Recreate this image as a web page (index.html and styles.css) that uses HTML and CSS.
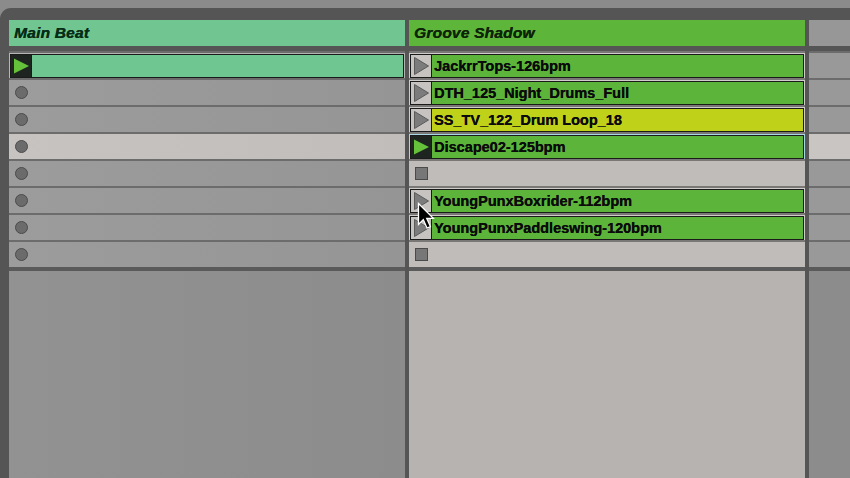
FILE: index.html
```html
<!DOCTYPE html>
<html>
<head>
<meta charset="utf-8">
<link rel="stylesheet" href="styles.css">
</head>
<body>
<div class="panel">
  <div class="board">
    <div class="track t-main">
      <div class="head head-mint">Main Beat</div>
      <div class="slots">
        <div class="slot"><div class="clip mint"><span class="play on"><svg width="20" height="22" viewBox="0 0 20 22"><path d="M3 3.5 L18 11 L3 18.5 Z" fill="#66c13a"/></svg></span><span class="name"></span></div></div>
        <div class="slot"><span class="rec"></span></div>
        <div class="slot"><span class="rec"></span></div>
        <div class="slot sel"><span class="rec"></span></div>
        <div class="slot"><span class="rec"></span></div>
        <div class="slot"><span class="rec"></span></div>
        <div class="slot"><span class="rec"></span></div>
        <div class="slot"><span class="rec"></span></div>
      </div>
      <div class="fill"></div>
    </div>

    <div class="track t-groove">
      <div class="head head-green">Groove Shadow</div>
      <div class="slots">
        <div class="slot"><div class="clip green"><span class="play"><svg width="20" height="22" viewBox="0 0 20 22"><path d="M3.5 2.5 L17.5 11 L3.5 19.5 Z" fill="#7c7c7c" stroke="#5a5a5a" stroke-width="1"/></svg></span><span class="name">JackrrTops-126bpm</span></div></div>
        <div class="slot"><div class="clip green"><span class="play"><svg width="20" height="22" viewBox="0 0 20 22"><path d="M3.5 2.5 L17.5 11 L3.5 19.5 Z" fill="#7c7c7c" stroke="#5a5a5a" stroke-width="1"/></svg></span><span class="name">DTH_125_Night_Drums_Full</span></div></div>
        <div class="slot"><div class="clip yellow"><span class="play"><svg width="20" height="22" viewBox="0 0 20 22"><path d="M3.5 2.5 L17.5 11 L3.5 19.5 Z" fill="#7c7c7c" stroke="#5a5a5a" stroke-width="1"/></svg></span><span class="name">SS_TV_122_Drum Loop_18</span></div></div>
        <div class="slot"><div class="clip green selected"><span class="play on"><svg width="20" height="22" viewBox="0 0 20 22"><path d="M3 3.5 L18 11 L3 18.5 Z" fill="#66c13a"/></svg></span><span class="name">Discape02-125bpm</span></div></div>
        <div class="slot"><span class="stop"></span></div>
        <div class="slot"><div class="clip green"><span class="play"><svg width="20" height="22" viewBox="0 0 20 22"><path d="M3.5 2.5 L17.5 11 L3.5 19.5 Z" fill="#7c7c7c" stroke="#5a5a5a" stroke-width="1"/></svg></span><span class="name">YoungPunxBoxrider-112bpm</span></div></div>
        <div class="slot"><div class="clip green"><span class="play"><svg width="20" height="22" viewBox="0 0 20 22"><path d="M3.5 2.5 L17.5 11 L3.5 19.5 Z" fill="#7c7c7c" stroke="#5a5a5a" stroke-width="1"/></svg></span><span class="name">YoungPunxPaddleswing-120bpm</span></div></div>
        <div class="slot"><span class="stop"></span></div>
      </div>
      <div class="fill"></div>
    </div>

    <div class="track t-next">
      <div class="head head-gray"></div>
      <div class="slots">
        <div class="slot"></div>
        <div class="slot"></div>
        <div class="slot"></div>
        <div class="slot sel"></div>
        <div class="slot"></div>
        <div class="slot"></div>
        <div class="slot"></div>
        <div class="slot"></div>
      </div>
      <div class="fill"></div>
    </div>
  </div>
  <svg class="cursor" width="18" height="28" viewBox="0 0 18 28"><path d="M1.5 1.5 L1.5 22.5 L6.3 17.6 L10 26 L13.4 24.6 L9.7 16.3 L16.3 16.3 Z" fill="#000" stroke="#fff" stroke-width="1.3" stroke-linejoin="miter"/></svg>
</div>
</body>
</html>
```
FILE: styles.css
```css
html, body {
  margin: 0;
  padding: 0;
}
body {
  width: 850px;
  height: 478px;
  overflow: hidden;
  background: #8b8b8b;
  font-family: "Liberation Sans", Arial, sans-serif;
}
.panel {
  position: relative;
  margin-top: 8px;
  height: 470px;
  background: #555555;
  border-top-left-radius: 11px;
  padding: 12px 0 0 9px;
  box-sizing: border-box;
}
.board {
  display: grid;
  grid-template-columns: 396px 396px 1fr;
  column-gap: 4px;
  height: 100%;
}
.track {
  display: flex;
  flex-direction: column;
}
.head {
  height: 26px;
  box-sizing: border-box;
  padding-left: 5px;
  display: flex;
  align-items: center;
  font-weight: bold;
  font-style: italic;
  font-size: 15.5px;
  letter-spacing: 0.2px;
}
.head-mint { background: #70c590; color: #062d16; text-shadow: 0.3px 0 0 #062d16; }
.head-green { background: #5db63a; color: #0e2407; text-shadow: 0.3px 0 0 #0e2407; }
.head-gray { background: #979797; }
.slots {
  margin-top: 5px;
  display: flex;
  flex-direction: column;
}
.slot {
  height: 25px;
  border-top: 2px solid #6c6c6c;
  display: flex;
  align-items: center;
  padding: 0 1px;
}
.t-main .slot { background: linear-gradient(90deg, #9c9c9c, #959595); }
.t-main .slot.sel { background: linear-gradient(90deg, #c6c3c0, #c0bdba); }
.t-groove .slot { background: #c0bcb9; border-top-color: #7a7876; }
.t-next .slot { background: #999999; }
.t-next .slot.sel { background: #c8c5c2; }
.fill {
  flex: 1;
  border-top: 4px solid #5a5a5a;
}
.t-main .fill { background: linear-gradient(90deg, #929292, #8c8c8c); }
.t-groove .fill { background: #b6b3b1; }
.t-next .fill { background: #8c8c8c; }

.clip {
  flex: 1;
  height: 24px;
  box-sizing: border-box;
  border: 1px solid #1a1a1a;
  box-shadow: 0 0 0 1px rgba(235, 235, 235, 0.35);
  display: flex;
  align-items: center;
}
.clip.mint { background: #6fc690; }
.clip.green { background: #5cb53a; }
.clip.yellow { background: #c0d11a; }
.clip.selected { box-shadow: 0 0 0 1px #a9d7e6; }
.play {
  width: 20px;
  height: 22px;
  flex: none;
  border-right: 1px solid #1a1a1a;
  background: #c6c3c0;
  display: flex;
}
.play.on { background: #1e2521; }
.name {
  padding-left: 2px;
  font-weight: bold;
  font-size: 14.5px;
  color: #0b0b0b;
  text-shadow: 0.2px 0 0 #0b0b0b;
  white-space: nowrap;
}
.rec {
  margin-left: 5px;
  width: 11px;
  height: 11px;
  border-radius: 50%;
  background: #6b6b6b;
  border: 1px solid #4b4b4b;
}
.stop {
  margin-left: 5px;
  width: 11px;
  height: 11px;
  background: #777777;
  border: 1px solid #4a4a4a;
}
.cursor {
  position: absolute;
  left: 417px;
  top: 194px;
}
```
